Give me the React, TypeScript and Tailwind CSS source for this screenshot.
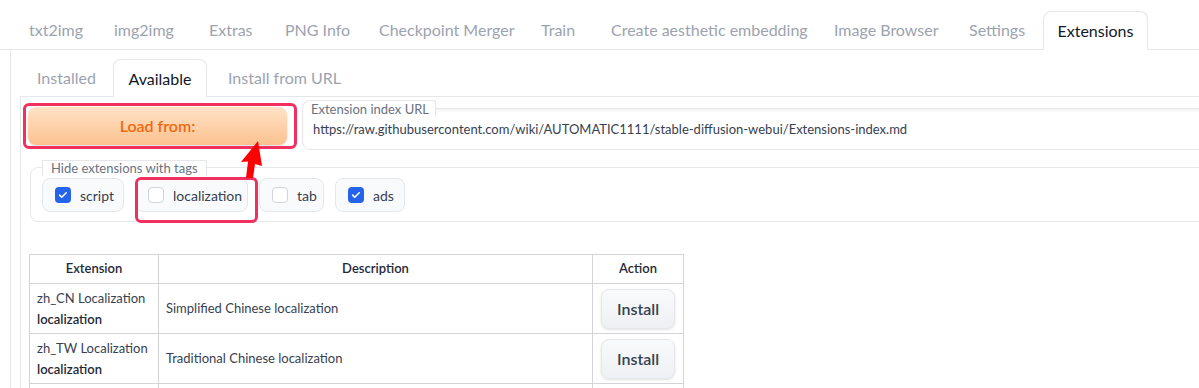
import React from "react";

const FONT = { fontFamily: '"Source Sans Pro", Lato, "Liberation Sans", sans-serif' };

const topTabs: { label: string; w: number }[] = [
  { label: "txt2img", w: 85 },
  { label: "img2img", w: 95 },
  { label: "Extras", w: 76 },
  { label: "PNG Info", w: 94 },
  { label: "Checkpoint Merger", w: 162 },
  { label: "Train", w: 70 },
  { label: "Create aesthetic embedding", w: 223 },
  { label: "Image Browser", w: 135 },
  { label: "Settings", w: 91 },
];

const tags = [
  { label: "script", checked: true, w: 82 },
  { label: "localization", checked: false, w: 113 },
  { label: "tab", checked: false, w: 65 },
  { label: "ads", checked: true, w: 70 },
];

const rows = [
  { name: "zh_CN Localization", tag: "localization", desc: "Simplified Chinese localization" },
  { name: "zh_TW Localization", tag: "localization", desc: "Traditional Chinese localization" },
  { name: "", tag: "", desc: "" },
];

function Checkbox({ checked }: { checked: boolean }) {
  if (checked) {
    return (
      <span className="flex h-[16px] w-[16px] items-center justify-center rounded-[4px] bg-[#2563eb]">
        <svg viewBox="0 0 16 16" className="h-[12px] w-[12px]" fill="none">
          <path d="M3.5 8.2l2.8 2.8 6-6" stroke="white" strokeWidth="2" strokeLinecap="round" strokeLinejoin="round" />
        </svg>
      </span>
    );
  }
  return <span className="h-[16px] w-[16px] rounded-[4px] border border-[#d1d5db] bg-white" />;
}

export default function App() {
  return (
    <div className="relative h-[388px] w-[1199px] overflow-hidden bg-white text-[#374151]" style={FONT}>
      {/* top tabs */}
      <div className="flex h-[50px] items-end border-b border-[#e5e7eb] pl-[12px]">
        {topTabs.map((t) => (
          <div key={t.label} className="flex h-[38px] items-center pl-[17px] text-[16px] text-[#9ca3af]" style={{ width: t.w }}>
            {t.label}
          </div>
        ))}
        <div className="relative -mb-px flex h-[39px] w-[105px] items-center justify-center rounded-t-lg border border-b-0 border-[#e5e7eb] bg-white text-[16px] text-[#111827]">
          Extensions
        </div>
      </div>

      {/* outer panel */}
      <div className="ml-[10px] h-[400px] w-[1300px] border-l border-[#e5e7eb] pl-[9px] pt-[10px]">
        {/* sub tabs */}
        <div className="flex h-[37px] items-end border-b border-[#e5e7eb]">
          <div className="flex h-[37px] w-[93px] items-center pl-[17px] text-[16px] text-[#9ca3af]">Installed</div>
          <div className="relative -mb-px flex h-[38px] w-[94px] items-center justify-center rounded-t-lg border border-b-0 border-[#e5e7eb] bg-white text-[16px] text-[#111827]">
            Available
          </div>
          <div className="flex h-[37px] items-center pl-[21px] text-[16px] text-[#9ca3af]">Install from URL</div>
        </div>

        {/* inner panel */}
        <div className="h-[400px] border-l border-[#e5e7eb] pt-[3px]">
          <div className="flex h-[50px] items-start">
            <button className="ml-[7px] mt-[7px] h-[38px] w-[259px] rounded-lg bg-gradient-to-b from-[#fee2c6] to-[#fcc18f] text-[16px] font-semibold text-[#ec6a10] shadow-sm">
              Load from:
            </button>
            <div className="relative ml-[15px] mt-[8px] h-[42px] w-[920px] rounded-lg border border-[#e5e7eb] bg-white shadow-[inset_0_2px_3px_rgba(0,0,0,0.05)]">
              <div className="absolute left-[-1px] top-[-9px] flex h-[17px] items-center rounded-tl-lg rounded-tr-[3px] border-x border-t border-[#e5e7eb] bg-white pl-[8px] pr-[6px] text-[13px] leading-none text-[#6b7280]">
                Extension index URL
              </div>
              <div className="flex h-full items-center pl-[10px] pt-[2px] text-[13px] text-[#374151]">
                https://raw.githubusercontent.com/wiki/AUTOMATIC1111/stable-diffusion-webui/Extensions-index.md
              </div>
            </div>
          </div>

          {/* tag filter group */}
          <div className="relative ml-[9px] mt-[17px] h-[55px] w-[1200px] rounded-lg border border-[#e5e7eb] pl-[11px] pt-[10px]">
            <div className="absolute left-[11px] top-[-8px] flex h-[16px] items-center border-x border-t border-[#e5e7eb] bg-white px-[8px] text-[13px] leading-none text-[#6b7280]">
              Hide extensions with tags
            </div>
            <div className="flex gap-[11px]">
              {tags.map((t) => (
                <label
                  key={t.label}
                  className="flex h-[34px] items-center gap-[9px] rounded-lg border border-[#e5e7eb] bg-[#f9fafb] pl-[12px] text-[14px] text-[#374151]"
                  style={{ width: t.w }}
                >
                  <Checkbox checked={t.checked} />
                  {t.label}
                </label>
              ))}
            </div>
          </div>

          {/* extensions table */}
          <table className="ml-[8px] mt-[32px] w-[654px] table-fixed border-collapse text-[13px] text-[#374151]">
            <colgroup>
              <col className="w-[129px]" />
              <col className="w-[434px]" />
              <col className="w-[91px]" />
            </colgroup>
            <thead>
              <tr className="h-[29px]">
                {["Extension", "Description", "Action"].map((h) => (
                  <th key={h} className="border border-[#d4d4d8] text-center text-[13px] font-semibold text-[#1f2937]">
                    {h}
                  </th>
                ))}
              </tr>
            </thead>
            <tbody>
              {rows.map((r, i) => (
                <tr key={i} className="h-[50px]">
                  <td className="whitespace-nowrap border border-[#d4d4d8] px-[7px] leading-[21px]">
                    {r.name}
                    <br />
                    <span className="font-semibold text-[#1f2937]">{r.tag}</span>
                  </td>
                  <td className="border border-[#d4d4d8] px-[7px]">{r.desc}</td>
                  <td className="border border-[#d4d4d8]">
                    {r.name && (
                      <button className="mx-auto flex h-[40px] w-[74px] items-center justify-center rounded-lg border border-[#e5e7eb] bg-gradient-to-b from-[#f9fafb] to-[#eef0f3] text-[16px] font-semibold text-[#374151] shadow-sm">
                        Install
                      </button>
                    )}
                  </td>
                </tr>
              ))}
            </tbody>
          </table>
        </div>
      </div>

      {/* annotations */}
      <div className="pointer-events-none absolute left-[23px] top-[103px] h-[46px] w-[274px] rounded-md border-[3px] border-[#f0305f]" />
      <div className="pointer-events-none absolute left-[135px] top-[177px] h-[46px] w-[123px] rounded-md border-[3px] border-[#f0305f]" />
      <svg className="pointer-events-none absolute left-0 top-0" width="1199" height="388" viewBox="0 0 1199 388">
        <polygon points="258,141 241,162 248,161.5 246,178 253,178 255,164 262,166" fill="#ff0000" />
      </svg>
    </div>
  );
}
